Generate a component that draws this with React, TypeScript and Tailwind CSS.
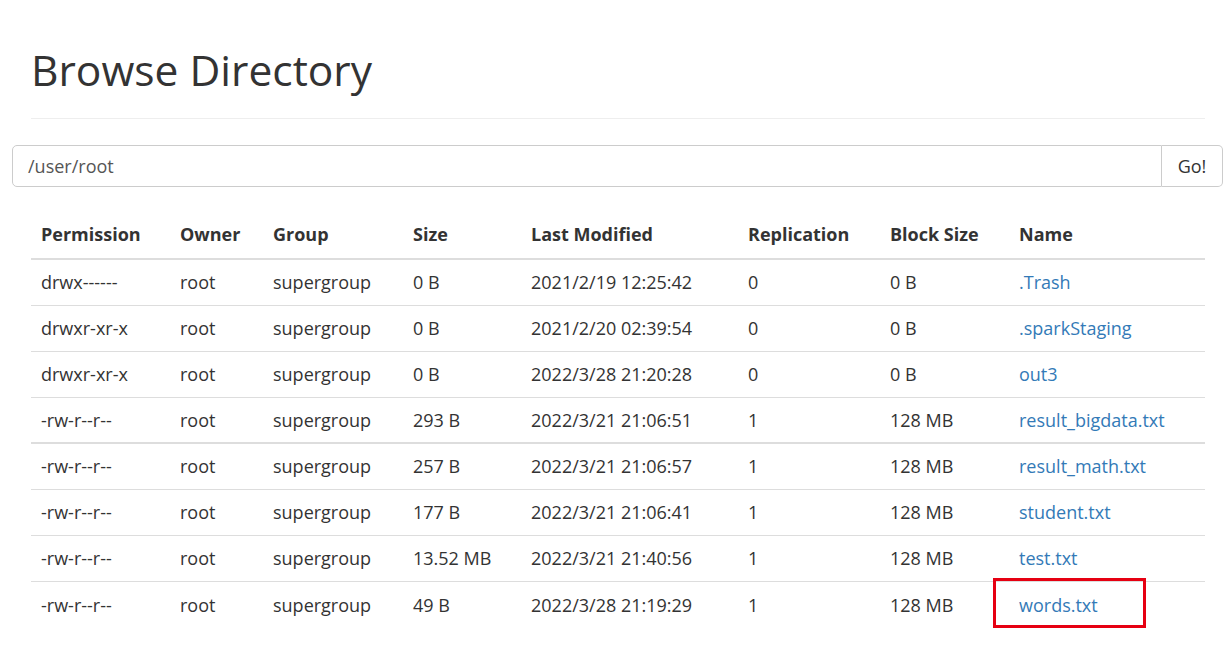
import React from "react";

type Row = {
  perm: string;
  size: string;
  modified: string;
  repl: string;
  block: string;
  name: string;
};

const rows: Row[] = [
  { perm: "drwx------", size: "0 B", modified: "2021/2/19 12:25:42", repl: "0", block: "0 B", name: ".Trash" },
  { perm: "drwxr-xr-x", size: "0 B", modified: "2021/2/20 02:39:54", repl: "0", block: "0 B", name: ".sparkStaging" },
  { perm: "drwxr-xr-x", size: "0 B", modified: "2022/3/28 21:20:28", repl: "0", block: "0 B", name: "out3" },
  { perm: "-rw-r--r--", size: "293 B", modified: "2022/3/21 21:06:51", repl: "1", block: "128 MB", name: "result_bigdata.txt" },
  { perm: "-rw-r--r--", size: "257 B", modified: "2022/3/21 21:06:57", repl: "1", block: "128 MB", name: "result_math.txt" },
  { perm: "-rw-r--r--", size: "177 B", modified: "2022/3/21 21:06:41", repl: "1", block: "128 MB", name: "student.txt" },
  { perm: "-rw-r--r--", size: "13.52 MB", modified: "2022/3/21 21:40:56", repl: "1", block: "128 MB", name: "test.txt" },
  { perm: "-rw-r--r--", size: "49 B", modified: "2022/3/28 21:19:29", repl: "1", block: "128 MB", name: "words.txt" },
];

const cols = ["Permission", "Owner", "Group", "Size", "Last Modified", "Replication", "Block Size", "Name"];
const widths = ["w-[139px]", "w-[93px]", "w-[140px]", "w-[118px]", "w-[217px]", "w-[142px]", "w-[129px]", "w-[196px]"];

export default function App() {
  return (
    <div className="min-h-screen bg-white text-[#333] font-['Open_Sans','Noto_Sans',sans-serif] text-[18px]">
      {/* header */}
      <div className="px-[31px] pt-[40px]">
        <h1 className="text-[42.5px] leading-[60px] font-normal">Browse Directory</h1>
        <div className="mt-[18px] h-px bg-[#eee] w-[1174px]" />
      </div>

      {/* path bar */}
      <div className="mt-[26px] ml-[12px] mr-[6px] flex h-[42px]">
        <div className="flex-1 flex items-center px-[15px] border border-[#ccc] rounded-l-[5px] text-[#555]">
          /user/root
        </div>
        <button className="w-[61px] border border-l-0 border-[#ccc] rounded-r-[5px] bg-white text-[#333]">Go!</button>
      </div>

      {/* listing */}
      <div className="mt-[24px] ml-[31px]">
        <div className="flex h-[49px] items-center pb-[1px] border-b-2 border-[#ddd] w-[1174px] font-bold">
          {cols.map((c, i) => (
            <div key={c} className={`${widths[i]} pl-[10px]`}>{c}</div>
          ))}
        </div>
        {rows.map((r, idx) => (
          <div
            key={r.name}
            className={`flex h-[46px] items-center w-[1174px] ${idx < rows.length - 1 ? (idx === 3 ? "border-b-2 border-[#ddd]" : "border-b border-[#ddd]") : ""}`}
          >
            <div className={`${widths[0]} pl-[10px]`}>{r.perm}</div>
            <div className={`${widths[1]} pl-[10px]`}>root</div>
            <div className={`${widths[2]} pl-[10px]`}>supergroup</div>
            <div className={`${widths[3]} pl-[10px]`}>{r.size}</div>
            <div className={`${widths[4]} pl-[10px]`}>{r.modified}</div>
            <div className={`${widths[5]} pl-[10px]`}>{r.repl}</div>
            <div className={`${widths[6]} pl-[10px]`}>{r.block}</div>
            <div className={`${widths[7]} pl-[10px] relative`}>
              <a className="text-[#337ab7] cursor-pointer">{r.name}</a>
              {r.name === "words.txt" && (
                <div className="absolute left-[-16px] top-[-14px] w-[153px] h-[50px] border-[3px] border-[#e60012]" />
              )}
            </div>
          </div>
        ))}
      </div>
    </div>
  );
}
